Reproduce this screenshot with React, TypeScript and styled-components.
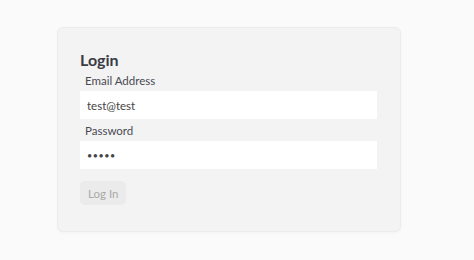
import React, { useState } from 'react';
import styled, { createGlobalStyle } from 'styled-components';

const GlobalStyle = createGlobalStyle`
  html, body {
    margin: 0;
    padding: 0;
    background: #fafafa;
    font-family: Lato, "Open Sans", "Liberation Sans", sans-serif;
  }
  * {
    box-sizing: border-box;
  }
`;

const Page = styled.div`
  min-height: 260px;
  padding: 27px 0 0 57px;
`;

const Card = styled.form`
  width: 344px;
  height: 205px;
  padding: 21px 23px 0 22px;
  background: #f3f3f3;
  border: 1px solid #ececec;
  border-radius: 6px;
  box-shadow: 0 1px 3px rgba(0, 0, 0, 0.03);
  display: flex;
  flex-direction: column;
`;

const Title = styled.h1`
  margin: 0;
  font-size: 16px;
  line-height: 22px;
  font-weight: 700;
  color: #3b3b46;
`;

const Field = styled.label<{ $gap?: number }>`
  display: flex;
  flex-direction: column;
  margin-top: ${({ $gap }) => $gap ?? 1}px;
`;

const Label = styled.span`
  padding-left: 5px;
  font-size: 11.5px;
  line-height: 18px;
  color: #4a4a53;
`;

const Input = styled.input<{ $small?: boolean }>`
  margin-top: 1px;
  height: 28px;
  width: 297px;
  padding: 0 7px;
  border: none;
  outline: none;
  background: #ffffff;
  font-family: inherit;
  font-size: ${({ $small }) => ($small ? '9px' : '11.5px')};
  letter-spacing: ${({ $small }) => ($small ? '0.5px' : '0')};
  color: #444444;
`;

const Button = styled.button`
  margin-top: 12px;
  align-self: flex-start;
  height: 24px;
  padding: 0 8px;
  border: none;
  border-radius: 5px;
  background: #ebebeb;
  font-family: inherit;
  font-size: 11.5px;
  color: #a9a9a9;
  cursor: default;
`;

const App: React.FC = () => {
  const [email, setEmail] = useState('test@test');
  const [password, setPassword] = useState('12345');

  return (
    <>
      <GlobalStyle />
      <Page>
        <Card onSubmit={(e) => e.preventDefault()}>
          <Title>Login</Title>
          <Field>
            <Label>Email Address</Label>
            <Input value={email} onChange={(e) => setEmail(e.target.value)} />
          </Field>
          <Field $gap={3}>
            <Label>Password</Label>
            <Input
              $small
              type="password"
              value={password}
              onChange={(e) => setPassword(e.target.value)}
            />
          </Field>
          <Button type="submit" disabled>Log In</Button>
        </Card>
      </Page>
    </>
  );
};

export default App;
